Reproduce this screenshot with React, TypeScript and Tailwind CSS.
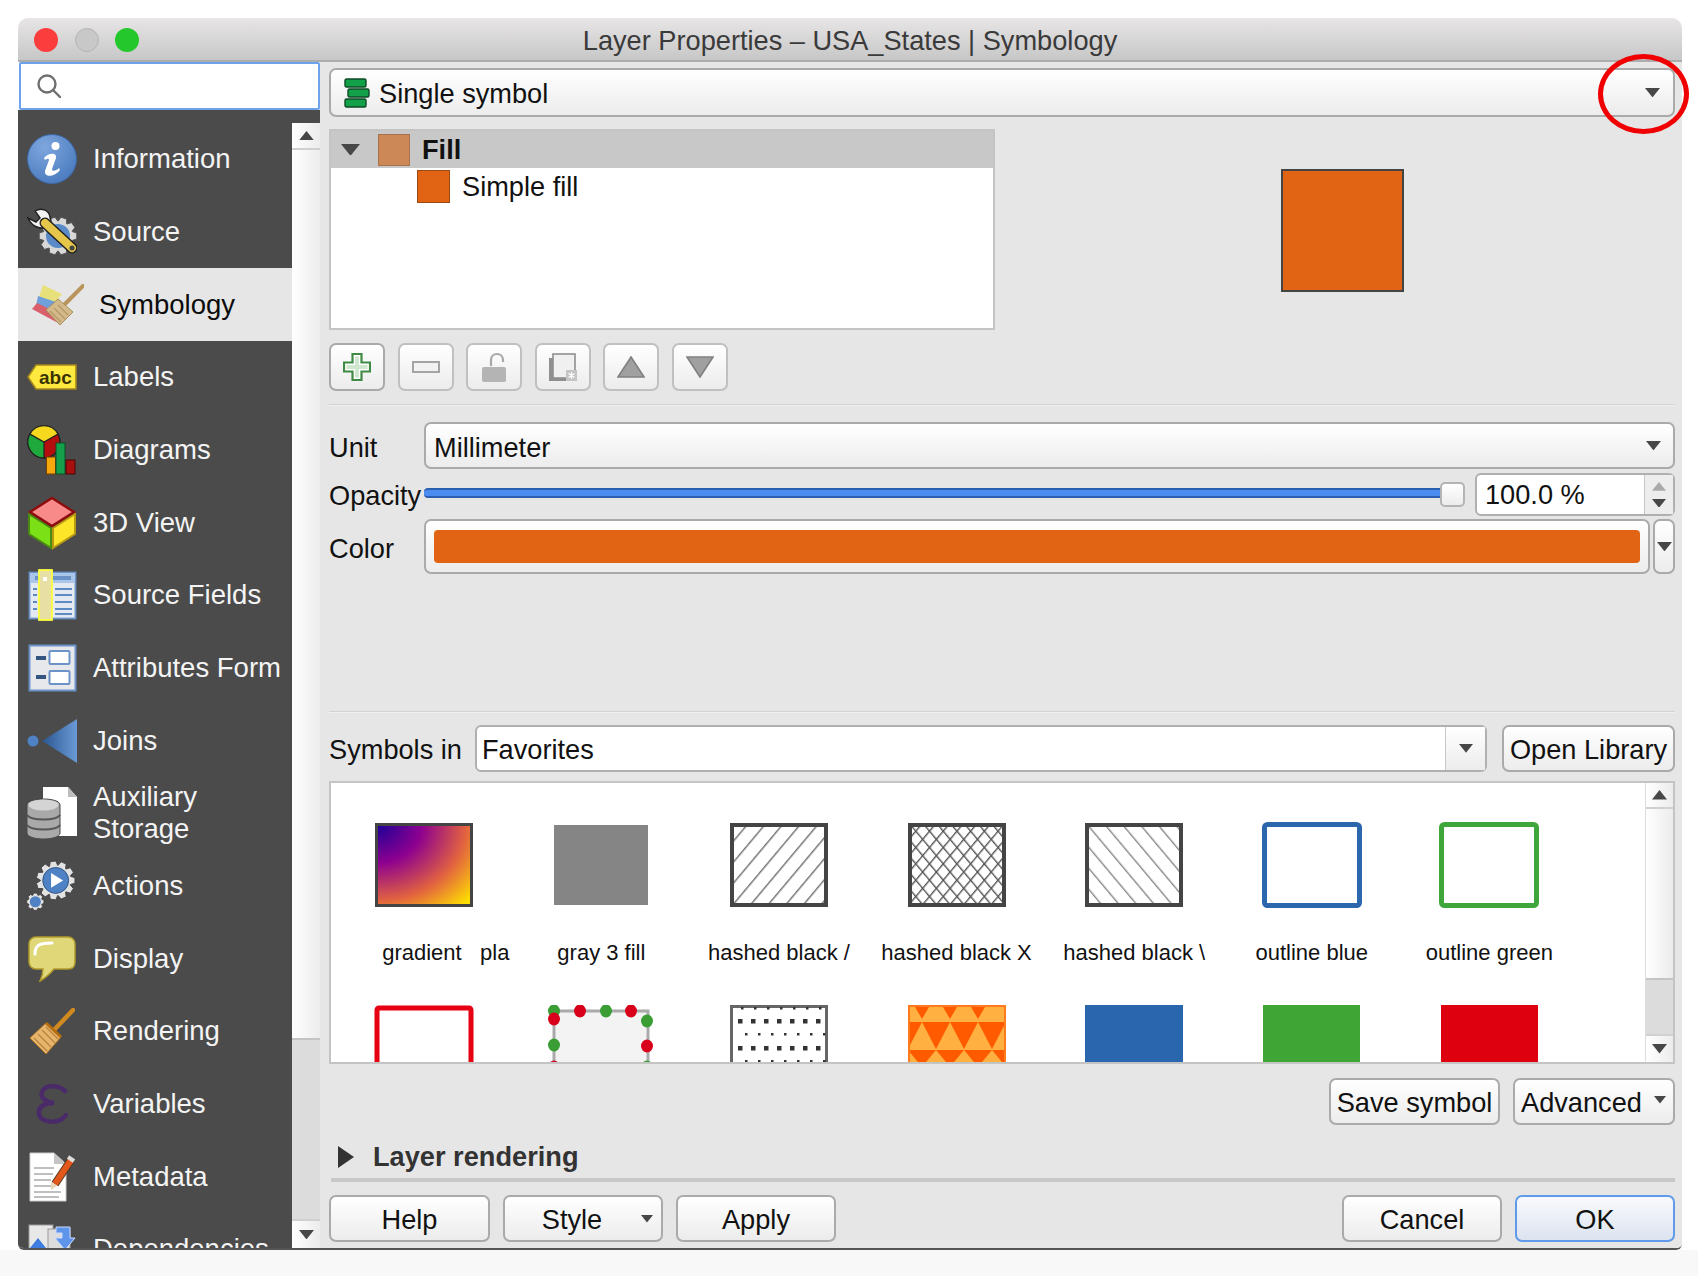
import type { ReactNode } from "react";

const btn =
  "flex items-center rounded-[7px] border-2 border-[#aaaaaa] bg-gradient-to-b from-[#ffffff] to-[#ececec]";
const btnText = `${btn} justify-center pt-[3px]`;

const gear = (cx: number, cy: number, ro: number, ri: number, teeth: number) => {
  const pts: string[] = [];
  for (let i = 0; i < teeth; i++) {
    const a = (i / teeth) * Math.PI * 2;
    const w = Math.PI / teeth;
    [
      [a - w * 0.95, ri],
      [a - w * 0.5, ro],
      [a + w * 0.5, ro],
      [a + w * 0.95, ri],
    ].forEach(([t, r]) => pts.push(`${cx + Math.cos(t) * r},${cy + Math.sin(t) * r}`));
  }
  return pts.join(" ");
};

const Down = ({ className = "" }: { className?: string }) => (
  <svg viewBox="0 0 16 10" className={className}>
    <polygon points="0,0 16,0 8,10" fill="#474747" />
  </svg>
);

const Up = ({ className = "" }: { className?: string }) => (
  <svg viewBox="0 0 16 10" className={className}>
    <polygon points="0,10 16,10 8,0" fill="#474747" />
  </svg>
);

const IconInfo = () => (
  <svg viewBox="0 0 50 50" className="w-[50px] h-[50px]">
    <defs>
      <radialGradient id="infoB" cx="0.35" cy="0.25" r="0.9">
        <stop offset="0" stopColor="#7ea6de" />
        <stop offset="1" stopColor="#4476bb" />
      </radialGradient>
    </defs>
    <circle cx="25" cy="25" r="24.5" fill="url(#infoB)" stroke="#3c68a8" />
    <circle cx="28.5" cy="12" r="4" fill="#fff" />
    <path d="M17 24 C21 19 30 18 29 24 L25 35 C25 38 29 37 32 34 L33 36 C28 43 17 44 18 37 L22 26 C22 24 20 25 18 26 Z" fill="#fff" />
  </svg>
);

const IconSource = () => (
  <svg viewBox="0 0 50 50" className="w-[50px] h-[50px]">
    <polygon points={gear(31, 29, 19, 15, 10)} fill="#d8d8d8" stroke="#555" />
    <circle cx="31" cy="29" r="12" fill="#5a8ac8" />
    <path d="M1 11 L9 15 L13 11 L8 4 C14 0 22 3 23 10 L24 14 L19 21 C13 22 5 20 1 11 Z" fill="#f2f2f2" stroke="#222" strokeWidth="1.5" />
    <path d="M18 16 L45 41" stroke="#222" strokeWidth="11" strokeLinecap="round" />
    <path d="M18 16 L45 41" stroke="#e5c64a" strokeWidth="8" strokeLinecap="round" />
    <circle cx="45" cy="41" r="2.5" fill="#444" />
  </svg>
);

const IconSymbology = () => (
  <svg viewBox="0 0 52 42" className="w-[52px] h-[42px]">
    <polygon points="6,16 11,1 30,10 20,22" fill="#e8e07a" />
    <polygon points="4,22 6,12 30,20 22,32" fill="#6fa0dc" />
    <polygon points="0,25 5,19 24,28 28,40" fill="#d9606a" />
    <path d="M51 2 L31 22" stroke="#b8955a" strokeWidth="4" strokeLinecap="round" />
    <polygon points="14,26 26,15 41,28 28,41" fill="#d4b98a" stroke="#a98d5c" />
    <path d="M18 27 L29 38 M22 24 L33 35 M26 21 L36 31" stroke="#b39867" strokeWidth="1.2" />
  </svg>
);

const IconLabels = () => (
  <svg viewBox="0 0 50 26" className="w-[50px] h-[26px]">
    <polygon points="1,13 9,1 49,1 49,25 9,25" fill="#ffe93f" stroke="#a4871c" strokeWidth="1.6" />
    <text x="12" y="19.5" fontSize="19" fontWeight="700" fill="#3a3200">abc</text>
  </svg>
);

const IconDiagrams = () => (
  <svg viewBox="0 0 50 50" className="w-[50px] h-[50px]">
    <circle cx="17" cy="17" r="16" fill="#b40e0e" stroke="#222" strokeWidth="1.5" />
    <path d="M17 17 L17 33 A16 16 0 0 1 3 9 Z" fill="#1fa83c" stroke="#222" strokeWidth="1.2" />
    <path d="M17 17 L3 9 A16 16 0 0 1 31 9 Z" fill="#f6d81e" stroke="#222" strokeWidth="1.2" />
    <rect x="19.5" y="32" width="9" height="17" fill="#f6a90f" stroke="#7b3f00" />
    <rect x="29" y="18" width="9" height="31" fill="#14a04a" stroke="#0a4e24" />
    <rect x="39" y="35" width="9" height="14" fill="#a80f0f" stroke="#4a0606" />
  </svg>
);

const Icon3D = () => (
  <svg viewBox="0 0 50 54" className="w-[50px] h-[54px]">
    <polygon points="2,18 24,32 24,52 2,38" fill="#7be016" stroke="#4b8a12" strokeWidth="2" />
    <polygon points="48,18 26,32 26,52 48,38" fill="#fde52a" stroke="#b79a12" strokeWidth="2" />
    <polygon points="25,2 47,16 25,30 3,16" fill="#f98a8a" stroke="#8d0d0d" strokeWidth="2.4" />
  </svg>
);

const IconFields = () => (
  <svg viewBox="0 0 50 52" className="w-[50px] h-[52px]">
    <rect x="2.5" y="3.5" width="46" height="46" fill="#e4e9f1" stroke="#6c93c7" strokeWidth="1.8" />
    <rect x="3" y="4" width="45" height="10" fill="#a9c6ea" />
    <rect x="8" y="7" width="36" height="4" fill="#6c93c7" />
    <path d="M28 20 H45 M28 26 H45 M28 33 H45 M28 40 H45 M28 45 H45 M6 20 H10 M6 26 H10 M6 33 H10 M6 40 H10" stroke="#5e8ac4" strokeWidth="1.8" />
    <rect x="12" y="1" width="13" height="50" fill="#e8dfa4" stroke="#fdfd3f" strokeWidth="1.8" />
    <rect x="16" y="8" width="4" height="4" fill="#fff" />
  </svg>
);

const IconForm = () => (
  <svg viewBox="0 0 50 48" className="w-[50px] h-[48px]">
    <rect x="2.5" y="1.5" width="46" height="45" fill="#e6e8eb" stroke="#6c93c7" strokeWidth="2" />
    <rect x="9" y="12" width="10" height="4" fill="#33557f" />
    <rect x="9" y="31" width="10" height="4" fill="#33557f" />
    <rect x="22.5" y="7" width="20" height="13" fill="#fff" stroke="#6c93c7" strokeWidth="2" rx="1" />
    <rect x="22.5" y="27" width="20" height="13" fill="#fff" stroke="#6c93c7" strokeWidth="2" rx="1" />
  </svg>
);

const IconJoins = () => (
  <svg viewBox="0 0 50 44" className="w-[50px] h-[44px]">
    <defs>
      <linearGradient id="joinB" x1="0" x2="1" y1="0" y2="0">
        <stop offset="0" stopColor="#2b568f" />
        <stop offset="1" stopColor="#6a9ad6" />
      </linearGradient>
    </defs>
    <circle cx="6" cy="22" r="5.5" fill="#4f82c4" />
    <polygon points="15,22 50,0 50,44" fill="url(#joinB)" />
  </svg>
);

const IconAux = () => (
  <svg viewBox="0 0 50 52" className="w-[50px] h-[52px]">
    <path d="M16 0 H41 L50 10 V49 H16 Z" fill="#fff" />
    <path d="M41 0 V10 H50 Z" fill="#bdbdbd" />
    <path d="M0 18 C0 10 33 10 33 18 V46 C33 54 0 54 0 46 Z" fill="#a9a9a9" stroke="#444" />
    <ellipse cx="16.5" cy="18" rx="15" ry="5.5" fill="#d4d4d4" />
    <path d="M0 28 C4 34 29 34 33 28 M0 38 C4 44 29 44 33 38" stroke="#555" strokeWidth="2" fill="none" />
  </svg>
);

const IconActions = () => (
  <svg viewBox="0 0 54 54" className="w-[54px] h-[54px]">
    <polygon points={gear(31, 21, 21, 16.5, 11)} fill="#e3e3e3" stroke="#444" />
    <circle cx="31" cy="21" r="14" fill="#4f82c4" stroke="#2a4f80" />
    <polygon points="26,13 39,21 26,29" fill="#fff" />
    <polygon points={gear(9, 44, 9.5, 7.5, 8)} fill="#e3e3e3" stroke="#444" />
    <circle cx="9" cy="44" r="6" fill="#4f82c4" />
  </svg>
);

const IconDisplay = () => (
  <svg viewBox="0 0 48 46" className="w-[48px] h-[46px]">
    <path d="M8 1 H40 C44 1 47 4 47 8 V26 C47 31 44 33 40 33 H26 C22 38 17 42 12 45 C14 41 15 37 15 33 H8 C4 33 1 30 1 26 V8 C1 4 4 1 8 1 Z" fill="#e0d878" stroke="#b09a2c" strokeWidth="1.5" />
    <path d="M7 18 C7 10 10 7 24 7" stroke="#fff" strokeWidth="3" fill="none" strokeLinecap="round" />
  </svg>
);

const IconRendering = () => (
  <svg viewBox="0 0 46 46" className="w-[46px] h-[46px]">
    <path d="M44 2 L25 22" stroke="#d08a20" strokeWidth="4.5" strokeLinecap="round" />
    <polygon points="1,30 17,15 32,29 17,46" fill="#e7b56e" stroke="#b57a22" />
    <path d="M5 30 L18 43 M9 26 L22 39 M13 22 L26 35 M17 19 L29 31" stroke="#b9843a" strokeWidth="1.3" />
    <path d="M17 15 L32 29" stroke="#b56e10" strokeWidth="3" />
  </svg>
);

const IconVariables = () => (
  <svg viewBox="0 0 32 42" className="w-[32px] h-[42px]">
    <path d="M29 8 C24 2 9 1 6 9 C4 15 10 19 18 20 C8 20 2 24 3 31 C5 40 23 42 30 32" stroke="#4b2a6a" strokeWidth="4.5" fill="none" strokeLinecap="round" />
  </svg>
);

const IconMetadata = () => (
  <svg viewBox="0 0 46 50" className="w-[46px] h-[50px]">
    <path d="M1 1 H25 L37 12 V49 H1 Z" fill="#fff" stroke="#ccc" />
    <path d="M25 1 V12 H37 Z" fill="#c4c4c4" />
    <path d="M5 16 H25 M5 22 H24 M5 28 H22 M5 34 H24 M5 40 H32 M5 45 H30" stroke="#aaa" strokeWidth="1.6" />
    <path d="M42 8 L26 32" stroke="#5a3a20" strokeWidth="8" />
    <path d="M42 8 L26 32" stroke="#e2581c" strokeWidth="6" />
    <polygon points="22,30 28,34 22,38" fill="#e8d6b8" />
    <path d="M39 5 L45 9" stroke="#ddd" strokeWidth="4" />
  </svg>
);

const IconDeps = () => (
  <svg viewBox="0 0 48 50" className="w-[48px] h-[50px]">
    <rect x="1" y="1" width="24" height="30" fill="#e8e8e8" stroke="#999" />
    <rect x="20" y="5" width="22" height="30" fill="#ddd" stroke="#999" />
    <path d="M28 3 H42 V14 H47 L37 26 L27 14 H34 V9 H28 Z" fill="#5e94ea" stroke="#c8dcff" />
    <polygon points="2,24 10,14 18,24" fill="#3f7de0" />
  </svg>
);

const nav: { label: ReactNode; icon: ReactNode }[] = [
  { label: "Information", icon: <IconInfo /> },
  { label: "Source", icon: <IconSource /> },
  { label: "Symbology", icon: <IconSymbology /> },
  { label: "Labels", icon: <IconLabels /> },
  { label: "Diagrams", icon: <IconDiagrams /> },
  { label: "3D View", icon: <Icon3D /> },
  { label: "Source Fields", icon: <IconFields /> },
  { label: "Attributes Form", icon: <IconForm /> },
  { label: "Joins", icon: <IconJoins /> },
  { label: <>Auxiliary<br />Storage</>, icon: <IconAux /> },
  { label: "Actions", icon: <IconActions /> },
  { label: "Display", icon: <IconDisplay /> },
  { label: "Rendering", icon: <IconRendering /> },
  { label: "Variables", icon: <IconVariables /> },
  { label: "Metadata", icon: <IconMetadata /> },
  { label: "Dependencies", icon: <IconDeps /> },
];

const Sidebar = () => (
  <div className="flex w-[302px] shrink-0 flex-col">
    <div className="ml-px flex h-[48px] items-center rounded-[2px] border-2 border-[#6ea3ec] bg-white pl-[15px]">
      <svg viewBox="0 0 26 26" className="h-[26px] w-[26px]" fill="none" stroke="#6f6f6f" strokeWidth="2.4">
        <circle cx="11" cy="11" r="8.5" />
        <path d="M17 17 L24 24" strokeLinecap="round" />
      </svg>
    </div>
    <div className="flex min-h-0 flex-1 bg-[#4b4b4b] pt-[13px]">
      <div className="w-[274px] shrink-0 overflow-hidden text-[27.5px] leading-[32px]">
        {nav.map((n, i) =>
          i === 2 ? (
            <div key={i} className="flex h-[72.67px] items-center bg-[#e6e6e6] pl-[14px] text-[#0c0c0c]">
              <div className="flex w-[52px] justify-center">{n.icon}</div>
              <span className="ml-[15px]">{n.label}</span>
            </div>
          ) : (
            <div key={i} className="flex h-[72.67px] items-center pl-[9px] text-[#f4f4f4]">
              <div className="flex h-[50px] w-[50px] items-center justify-center">{n.icon}</div>
              <span className="ml-[16px]">{n.label}</span>
            </div>
          ),
        )}
      </div>
      <div className="flex w-[28px] shrink-0 flex-col bg-gradient-to-r from-[#ffffff] to-[#ececec]">
        <div className="flex h-[27px] items-center justify-center border-b-2 border-[#d0d0d0]">
          <Up className="w-[15px]" />
        </div>
        <div className="flex-1" />
        <div className="h-[181px] border-t-2 border-[#c4c4c4] bg-[#dcdcdc]" />
        <div className="flex h-[29px] items-center justify-center border-t-2 border-[#d0d0d0]">
          <Down className="w-[15px]" />
        </div>
      </div>
    </div>
  </div>
);

const frame = (children: ReactNode) => (
  <svg viewBox="0 0 98 84" preserveAspectRatio="none" className="h-[84px] w-[98px]">
    {children}
  </svg>
);

const hatch = (id: string, period: number, angle: number, color: string, width: number) => (
  <pattern id={id} width={period} height={period} patternUnits="userSpaceOnUse" patternTransform={`rotate(${angle})`}>
    <line x1="0" y1="0" x2="0" y2={period} stroke={color} strokeWidth={width} />
  </pattern>
);

const cells: { label: string; art: ReactNode; labelClass?: string }[] = [
  {
    label: "gradient   pla",
    labelClass: "ml-[44px]",
    art: frame(
      <>
        <defs>
          <radialGradient id="g1" cx="0" cy="0" r="1.35">
            <stop offset="0" stopColor="#1a0096" />
            <stop offset="0.35" stopColor="#8c0090" />
            <stop offset="0.7" stopColor="#e2633f" />
            <stop offset="1" stopColor="#ffe000" />
          </radialGradient>
        </defs>
        <rect x="1.5" y="1.5" width="95" height="81" fill="url(#g1)" stroke="#444" strokeWidth="3" />
      </>,
    ),
  },
  {
    label: "gray 3 fill",
    art: (
      <svg viewBox="0 0 94 80" className="h-[80px] w-[94px]">
        <rect width="94" height="80" fill="#858585" />
      </svg>
    ),
  },
  {
    label: "hashed black /",
    art: frame(
      <>
        <defs>{hatch("h1", 13.5, 40, "#777", 3)}</defs>
        <rect x="2" y="2" width="94" height="80" fill="url(#h1)" stroke="#444" strokeWidth="4" />
      </>,
    ),
  },
  {
    label: "hashed black X",
    art: frame(
      <>
        <defs>
          {hatch("h2", 10.5, 40, "#555", 2.8)}
          {hatch("h3", 10.5, -40, "#555", 2.8)}
        </defs>
        <rect x="2" y="2" width="94" height="80" fill="url(#h2)" />
        <rect x="2" y="2" width="94" height="80" fill="url(#h3)" stroke="#444" strokeWidth="4" />
      </>,
    ),
  },
  {
    label: "hashed black \\",
    art: frame(
      <>
        <defs>{hatch("h4", 13.5, -40, "#888", 2.8)}</defs>
        <rect x="2" y="2" width="94" height="80" fill="url(#h4)" stroke="#444" strokeWidth="4" />
      </>,
    ),
  },
  {
    label: "outline blue",
    art: (
      <svg viewBox="0 0 100 86" className="h-[86px] w-[100px]">
        <rect x="2.5" y="2.5" width="95" height="81" rx="3" fill="#fff" stroke="#2a67ad" strokeWidth="5" />
      </svg>
    ),
  },
  {
    label: "outline green",
    art: (
      <svg viewBox="0 0 100 86" className="h-[86px] w-[100px]">
        <rect x="2.5" y="2.5" width="95" height="81" rx="3" fill="#fff" stroke="#3ea63a" strokeWidth="5" />
      </svg>
    ),
  },
];

const bigDots = [8, 21, 34, 47, 60, 73, 86];

const row2: ReactNode[] = [
  <svg key="a" viewBox="0 0 100 84" className="h-[84px] w-[100px]">
    <rect x="3" y="3" width="94" height="90" rx="2" fill="#fff" stroke="#e60012" strokeWidth="5" />
  </svg>,
  <svg key="b" viewBox="0 0 108 84" className="h-[84px] w-[108px]">
    <rect x="7" y="6" width="94" height="90" fill="#f3f3f3" stroke="#aaa" strokeWidth="3" />
    {[
      [7, 6, "#3a9e35"],
      [33, 6, "#d9001b"],
      [59, 6, "#3a9e35"],
      [84, 6, "#d9001b"],
      [7, 14, "#d9001b"],
      [7, 40, "#3a9e35"],
      [7, 62, "#d9001b"],
      [100, 16, "#3a9e35"],
      [100, 41, "#d9001b"],
      [100, 62, "#3a9e35"],
    ].map(([cx, cy, fill], i) => (
      <ellipse key={i} cx={cx as number} cy={cy as number} rx="6" ry="6.5" fill={fill as string} />
    ))}
  </svg>,
  <svg key="c" viewBox="0 0 98 84" className="h-[84px] w-[98px]">
    <rect x="1.5" y="1.5" width="95" height="90" fill="#fff" stroke="#666" strokeWidth="3" />
    {bigDots.map((x) => (
      <g key={x} fill="#333">
        <rect x={x} y="14" width="4.5" height="4.5" />
        <rect x={x} y="41" width="4.5" height="4.5" />
        <rect x={x + 7} y="28" width="2.5" height="2.5" />
        <rect x={x + 7} y="55" width="2.5" height="2.5" />
        <rect x={x + 3} y="2" width="2.5" height="2.5" />
      </g>
    ))}
  </svg>,
  <svg key="d" viewBox="0 0 98 84" className="h-[84px] w-[98px]">
    <rect width="98" height="84" fill="#ffb040" />
    {[14, 42, 70].map((x) => (
      <polygon key={x} points={`${x - 7},2 ${x + 7},2 ${x},14`} fill="#ff5a00" />
    ))}
    {[0, 28, 56, 84, 112].map((x) => (
      <polygon key={x} points={`${x - 14},17 ${x + 14},17 ${x},44`} fill="#ff5a00" />
    ))}
    {[14, 42, 70, 98].map((x) => (
      <polygon key={x} points={`${x - 14},45 ${x + 14},45 ${x},62`} fill="#ff5a00" />
    ))}
    <rect x="1" y="1" width="96" height="84" fill="none" stroke="#ff7a1c" strokeWidth="2" />
  </svg>,
  <div key="e" className="h-[84px] w-[98px] bg-[#2a66ad]" />,
  <div key="f" className="h-[84px] w-[97px] bg-[#3fa636]" />,
  <div key="g" className="h-[84px] w-[97px] bg-[#df000f]" />,
];

const Panel = () => (
  <div className="flex min-w-0 flex-1 flex-col bg-[#e6e6e6] pl-[9px] pr-[7px] pt-[6px]">
    <div className={`${btn} h-[49px] pl-[13px] pr-[13px]`}>
      <svg viewBox="0 0 26 30" className="h-[30px] w-[26px] shrink-0">
        <rect x="1" y="1" width="21" height="8" rx="1.5" fill="#12a148" stroke="#0d4a25" strokeWidth="1.4" />
        <rect x="4" y="11" width="21" height="8" rx="1.5" fill="#12a148" stroke="#0d4a25" strokeWidth="1.4" />
        <rect x="1" y="21" width="21" height="8" rx="1.5" fill="#12a148" stroke="#0d4a25" strokeWidth="1.4" />
      </svg>
      <span className="ml-[9px] flex-1 pt-[3px]">Single symbol</span>
      <Down className="w-[15px]" />
    </div>

    <div className="mt-[12px] flex h-[201px]">
      <div className="w-[666px] shrink-0 border-2 border-[#c4c4c4] bg-white">
        <div className="flex h-[37px] items-center bg-[#c8c8c8] pl-[10px] font-bold">
          <Down className="w-[19px]" />
          <div className="ml-[18px] h-[32px] w-[32px] border border-[#a8714e] bg-[#cd8858]" />
          <span className="ml-[12px]">Fill</span>
        </div>
        <div className="mt-[2px] flex items-center pl-[86px]">
          <div className="h-[33px] w-[33px] border border-[#9c4a12] bg-[#e06414]" />
          <span className="ml-[12px]">Simple fill</span>
        </div>
      </div>
      <div className="ml-[286px] mt-[40px] h-[123px] w-[123px] border-2 border-[#444444] bg-[#e06414]" />
    </div>

    <div className="mt-[13px] flex gap-[12.5px]">
      <div className={`${btn} h-[48px] w-[56px] justify-center border-[#8a8a8a]`}>
        <svg viewBox="0 0 28 28" className="h-[28px] w-[28px]">
          <path d="M9.5 1 H18.5 V9.5 H27 V18.5 H18.5 V27 H9.5 V18.5 H1 V9.5 H9.5 Z" fill="#fff" stroke="#3f8a44" strokeWidth="2.2" />
          <path d="M12 3.5 H16 V12 H24.5 V16 H16 V24.5 H12 V16 H3.5 V12 H12 Z" fill="#cfe6cf" />
        </svg>
      </div>
      <div className={`${btn} h-[48px] w-[56px] justify-center border-[#c0c0c0]`}>
        <svg viewBox="0 0 28 12" className="h-[12px] w-[28px]">
          <rect x="1" y="1" width="26" height="10" fill="#f2f2f2" stroke="#a4a4a4" strokeWidth="2" />
        </svg>
      </div>
      <div className={`${btn} h-[48px] w-[56px] justify-center border-[#c0c0c0]`}>
        <svg viewBox="0 0 26 30" className="h-[30px] w-[26px]">
          <path d="M10 14 V8 C10 0 22 0 22 8 V10" fill="none" stroke="#a8a8a8" strokeWidth="2.2" />
          <rect x="1" y="15" width="24" height="15" rx="2" fill="#b4b4b4" />
        </svg>
      </div>
      <div className={`${btn} h-[48px] w-[56px] justify-center border-[#c0c0c0]`}>
        <svg viewBox="0 0 28 28" className="h-[28px] w-[28px]">
          <rect x="0" y="5" width="20" height="23" fill="#8f8f8f" />
          <rect x="4" y="1" width="22" height="24" fill="#f0f0f0" stroke="#8f8f8f" strokeWidth="1.6" />
          <rect x="17" y="17" width="11" height="11" fill="#c4c4c4" />
          <path d="M22.5 19 V26 M19.5 20.5 L25.5 24.5 M25.5 20.5 L19.5 24.5" stroke="#fff" strokeWidth="1.2" />
        </svg>
      </div>
      <div className={`${btn} h-[48px] w-[56px] justify-center border-[#c0c0c0]`}>
        <svg viewBox="0 0 28 22" className="h-[22px] w-[28px]">
          <polygon points="14,1 27,21 1,21" fill="#a0a0a0" stroke="#808080" strokeWidth="1.6" />
        </svg>
      </div>
      <div className={`${btn} h-[48px] w-[56px] justify-center border-[#c0c0c0]`}>
        <svg viewBox="0 0 28 22" className="h-[22px] w-[28px]">
          <polygon points="14,21 27,1 1,1" fill="#a0a0a0" stroke="#808080" strokeWidth="1.6" />
        </svg>
      </div>
    </div>

    <div className="mt-[13px] h-[2px] border-t border-[#d2d2d2] bg-[#f0f0f0]" />

    <div className="mt-[16px] flex h-[47px] items-center">
      <span className="w-[95px] shrink-0 pt-[4px]">Unit</span>
      <div className={`${btn} h-[47px] flex-1 justify-between pl-[8px] pr-[12px]`}>
        <span className="pt-[4px]">Millimeter</span>
        <Down className="w-[15px]" />
      </div>
    </div>

    <div className="mt-[4px] flex h-[43px] items-center">
      <span className="w-[95px] shrink-0 pt-[2px]">Opacity</span>
      <div className="mb-[3px] h-[10px] flex-1 rounded-l-[4px] border-y-2 border-[#2a5fb0] bg-[#4a8cf0]" />
      <div className="mb-[1px] h-[25px] w-[25px] rounded-[5px] border-2 border-[#b4b4b4] bg-gradient-to-b from-[#ffffff] to-[#ececec]" />
      <div className="ml-[10px] flex h-[43px] w-[200px] items-center rounded-[6px] border-2 border-[#b0b0b0] bg-white pl-[8px]">
        <span className="flex-1">100.0 %</span>
        <div className="flex h-full w-[29px] flex-col items-center justify-center gap-[8px] border-l border-[#c8c8c8] bg-[#ededed]">
          <Up className="w-[14px] opacity-40" />
          <Down className="w-[14px]" />
        </div>
      </div>
    </div>

    <div className="mt-[3px] flex h-[55px] items-center">
      <span className="w-[95px] shrink-0 pt-[4px]">Color</span>
      <div className={`${btn} h-[55px] w-[1226px] shrink-0 justify-center px-[8px]`}>
        <div className="h-[33px] w-full rounded-[4px] bg-[#e06414]" />
      </div>
      <div className={`${btn} ml-[3px] h-[55px] w-[22px] shrink-0 justify-center`}>
        <Down className="w-[15px]" />
      </div>
    </div>

    <div className="mt-[137px] h-[2px] border-t border-[#d2d2d2] bg-[#f0f0f0]" />

    <div className="mt-[12px] flex h-[47px] items-center">
      <span className="w-[146px] shrink-0 pt-[3px]">Symbols in</span>
      <div className="flex h-[47px] w-[1012px] shrink-0 rounded-[6px] border-2 border-[#b0b0b0] bg-white">
        <span className="flex flex-1 items-center pl-[5px] pt-[3px]">Favorites</span>
        <div className="flex w-[40px] items-center justify-center border-l border-[#c8c8c8] bg-gradient-to-b from-[#ffffff] to-[#ececec]">
          <Down className="w-[14px]" />
        </div>
      </div>
      <div className={`${btnText} ml-[15px] h-[47px] flex-1`}>Open Library</div>
    </div>

    <div className="mt-[9px] flex h-[283px] border-2 border-[#c4c4c4] bg-white">
      <div className="min-w-0 flex-1 overflow-hidden pl-[4px] pt-[39px] text-[22px]">
        <div className="grid grid-cols-[repeat(7,177.6px)]">
          {cells.map((c) => (
            <div key={c.label} className="flex h-[183px] flex-col items-center">
              <div className="flex h-[86px] items-center">{c.art}</div>
              <span className={`mt-[32px] whitespace-pre leading-[26px] ${c.labelClass ?? ""}`}>{c.label}</span>
            </div>
          ))}
          {row2.map((r, i) => (
            <div key={i} className="flex h-[84px] justify-center">
              {r}
            </div>
          ))}
        </div>
      </div>
      <div className="flex w-[28px] shrink-0 flex-col border-l border-[#dddddd] bg-gradient-to-r from-[#ffffff] to-[#ececec]">
        <div className="flex h-[26px] items-center justify-center border-b-2 border-[#d0d0d0]">
          <Up className="w-[15px]" />
        </div>
        <div className="flex-1" />
        <div className="h-[56px] border-t-2 border-[#c4c4c4] bg-[#dcdcdc]" />
        <div className="flex h-[28px] items-center justify-center border-t-2 border-[#d0d0d0]">
          <Down className="w-[15px]" />
        </div>
      </div>
    </div>

    <div className="mt-[14px] flex justify-end gap-[13px]">
      <div className={`${btnText} h-[47px] w-[171px]`}>Save symbol</div>
      <div className={`${btn} h-[47px] w-[162px] justify-between pl-[6px] pr-[7px]`}>
        <span className="pt-[3px]">Advanced</span>
        <Down className="mb-[3px] w-[12px]" />
      </div>
    </div>

    <div className="mt-[20px] flex h-[24px] items-center pl-[9px] font-bold text-[#333333]">
      <svg viewBox="0 0 16 22" className="h-[22px] w-[16px]">
        <polygon points="0,0 16,11 0,22" fill="#333333" />
      </svg>
      <span className="ml-[19px]">Layer rendering</span>
    </div>

    <div className="ml-[2px] mt-[9px] h-[4px] bg-[#c8c8c8]" />

    <div className="mt-[13px] flex h-[47px] justify-between">
      <div className="flex gap-[13px]">
        <div className={`${btnText} h-[47px] w-[161px]`}>Help</div>
        <div className={`${btnText} relative h-[47px] w-[160px] pr-[22px]`}>
          Style
          <Down className="absolute right-[8px] top-[18px] w-[12px]" />
        </div>
        <div className={`${btnText} h-[47px] w-[160px]`}>Apply</div>
      </div>
      <div className="flex gap-[13px]">
        <div className={`${btnText} h-[47px] w-[160px]`}>Cancel</div>
        <div className="flex h-[47px] w-[160px] items-center justify-center rounded-[7px] border-2 border-[#5f9bea] bg-gradient-to-b from-[#f8f9fc] to-[#dde4f0] pt-[3px]">
          OK
        </div>
      </div>
    </div>
  </div>
);

export default function App() {
  return (
    <div className="relative flex h-[1276px] w-[1698px] flex-col overflow-hidden bg-white text-[27.2px] leading-none text-[#111111] [font-family:'Liberation_Sans',Arial,sans-serif]">
      <div className="ml-[18px] mt-[18px] flex h-[1232px] w-[1664px] flex-col overflow-hidden rounded-t-[10px] rounded-b-[6px] border-b-2 border-[#555555]">
        <div className="relative flex h-[44px] shrink-0 items-center justify-center border-b-2 border-[#adadad] bg-gradient-to-b from-[#e7e5e6] to-[#c8c7c8] pt-[4px] text-[#3a3a3a]">
          <div className="absolute left-[16px] top-[10px] flex gap-[16.5px]">
            <div className="h-[24px] w-[24px] rounded-full bg-[#fc3d3d]" />
            <div className="h-[24px] w-[24px] rounded-full border border-[#b4b4b4] bg-[#c8c8c8]" />
            <div className="h-[24px] w-[24px] rounded-full bg-[#25c82c]" />
          </div>
          Layer Properties – USA_States | Symbology
        </div>
        <div className="flex min-h-0 flex-1">
          <Sidebar />
          <Panel />
        </div>
      </div>
      <div className="flex-1 bg-[#f8f8f8]" />
      <div className="absolute left-[1598px] top-[54px] h-[80px] w-[91px] rounded-[50%] border-[5px] border-[#f00000]" />
    </div>
  );
}
